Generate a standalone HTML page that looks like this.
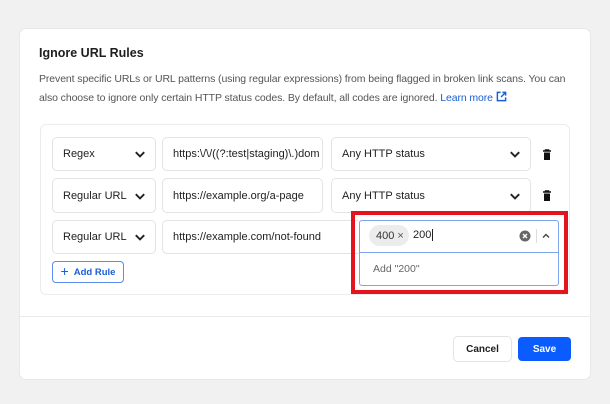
<!DOCTYPE html>
<html><head><style>
*{box-sizing:border-box;margin:0;padding:0}
body{width:610px;height:404px;background:#f1f1f1;font-family:"Liberation Sans",sans-serif;position:relative;overflow:hidden;color:#1e1e1e}
.a{position:absolute}
.card{left:19px;top:28px;width:572px;height:352px;background:#fff;border-radius:7px;border:1px solid #e8e8e8}
.f{position:absolute;border:1px solid #e3e3e3;border-radius:5px;background:#fff;font-size:11px;display:flex;align-items:center;padding-left:10px;white-space:nowrap;overflow:hidden}
.chev{position:absolute;right:9px;top:50%;margin-top:-6px}
</style></head><body>
<div class="a card"></div>
<div class="a" style="left:39px;top:46px;font-size:12.5px;font-weight:bold;color:#1e1e1e">Ignore URL Rules</div>
<div class="a" style="left:39px;top:70px;width:530px;font-size:10.5px;letter-spacing:-0.1px;line-height:18.5px;color:#555">Prevent specific URLs or URL patterns (using regular expressions) from being flagged in broken link scans. You can also choose to ignore only certain HTTP status codes. By default, all codes are ignored. <span style="color:#1a5fd8">Learn more</span> <svg width="11" height="11" viewBox="0 0 12 12" style="vertical-align:-1px"><path d="M5 1.5H1.5v9h9V7M7 1.5h3.5V5M10.5 1.5L5.5 6.5" fill="none" stroke="#1a5fd8" stroke-width="1.6"/></svg></div>
<div class="a" style="left:40px;top:124px;width:530px;height:171px;border:1px solid #ececec;border-radius:6px"></div>

<div class="f" style="left:52px;top:137px;width:104px;height:34px">Regex<svg class="chev" width="12" height="12" viewBox="0 0 10 10"><path d="M1.5 3.5L5 7l3.5-3.5" fill="none" stroke="#222" stroke-width="1.6"/></svg></div>
<div class="f" style="left:162px;top:137px;width:161px;height:34px">https:\/\/((?:test|staging)\.)dom</div>
<div class="f" style="left:331px;top:137px;width:200px;height:34px">Any HTTP status<svg class="chev" width="12" height="12" viewBox="0 0 10 10"><path d="M1.5 3.5L5 7l3.5-3.5" fill="none" stroke="#222" stroke-width="1.6"/></svg></div>
<svg class="a" style="left:542px;top:149px" width="10" height="12" viewBox="0 0 10 12"><path d="M1 2h8M3.5 2V1h3v1" stroke="#111" stroke-width="1.5" fill="none"/><rect x="2" y="3.5" width="6" height="7.5" fill="#111"/></svg>

<div class="f" style="left:52px;top:178px;width:104px;height:35px">Regular URL<svg class="chev" width="12" height="12" viewBox="0 0 10 10"><path d="M1.5 3.5L5 7l3.5-3.5" fill="none" stroke="#222" stroke-width="1.6"/></svg></div>
<div class="f" style="left:162px;top:178px;width:161px;height:35px">https://example.org/a-page</div>
<div class="f" style="left:331px;top:178px;width:200px;height:35px">Any HTTP status<svg class="chev" width="12" height="12" viewBox="0 0 10 10"><path d="M1.5 3.5L5 7l3.5-3.5" fill="none" stroke="#222" stroke-width="1.6"/></svg></div>
<svg class="a" style="left:542px;top:190px" width="10" height="12" viewBox="0 0 10 12"><path d="M1 2h8M3.5 2V1h3v1" stroke="#111" stroke-width="1.5" fill="none"/><rect x="2" y="3.5" width="6" height="7.5" fill="#111"/></svg>

<div class="f" style="left:52px;top:220px;width:104px;height:34px">Regular URL<svg class="chev" width="12" height="12" viewBox="0 0 10 10"><path d="M1.5 3.5L5 7l3.5-3.5" fill="none" stroke="#222" stroke-width="1.6"/></svg></div>
<div class="f" style="left:162px;top:220px;width:200px;height:34px">https://example.com/not-found</div>

<div class="a" style="left:52px;top:261px;width:72px;height:22px;border:1px solid #5b8def;border-radius:4px;color:#1a5fd8;font-size:9.5px;font-weight:bold;display:flex;align-items:center;justify-content:center;gap:5px"><span style="font-size:14px;font-weight:normal;margin-top:-2px">+</span>Add Rule</div>

<div class="a" style="left:351px;top:211px;width:217px;height:83px;border:4px solid #e3141c"></div>
<div class="a" style="left:359px;top:220px;width:200px;height:66px;border:1px solid #7da4ec;border-radius:3px;background:#fff"></div>
<div class="a" style="left:360px;top:252px;width:198px;height:1px;background:#7da4ec"></div>
<div class="a" style="left:369px;top:225px;width:40px;height:21px;background:#ececec;border-radius:11px;font-size:11px;color:#333;display:flex;align-items:center;padding-left:7px">400 <span style="margin-left:3px;color:#555">×</span></div>
<div class="a" style="left:413px;top:229px;font-size:11px;color:#222">200<span style="border-left:1px solid #222;margin-left:1px"></span></div>
<svg class="a" style="left:519px;top:230px" width="12" height="12" viewBox="0 0 12 12"><circle cx="6" cy="6" r="5.5" fill="#666"/><path d="M4 4l4 4M8 4l-4 4" stroke="#fff" stroke-width="1.4"/></svg>
<div class="a" style="left:536px;top:229px;width:1px;height:14px;background:#ddd"></div>
<svg class="a" style="left:541px;top:231px" width="10" height="10" viewBox="0 0 10 10"><path d="M2 6.5L5 3.5l3 3" fill="none" stroke="#444" stroke-width="1.4"/></svg>
<div class="a" style="left:373px;top:263px;font-size:10.5px;color:#666">Add "200"</div>

<div class="a" style="left:20px;top:316px;width:570px;height:1px;background:#eaeaea"></div>
<div class="a" style="left:453px;top:336px;width:59px;height:26px;border:1px solid #e3e3e3;border-radius:5px;font-size:10px;font-weight:bold;display:flex;align-items:center;justify-content:center">Cancel</div>
<div class="a" style="left:518px;top:337px;width:53px;height:24px;background:#0a5cff;border-radius:4px;color:#fff;font-size:10px;font-weight:bold;display:flex;align-items:center;justify-content:center">Save</div>
</body></html>
